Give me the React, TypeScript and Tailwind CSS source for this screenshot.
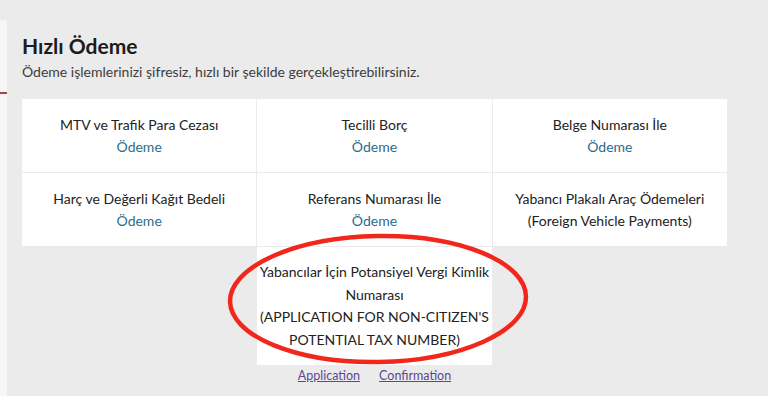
import React from "react";

const cells = [
  { lines: ["MTV ve Trafik Para Cezası"], link: "Ödeme" },
  { lines: ["Tecilli Borç"], link: "Ödeme" },
  { lines: ["Belge Numarası İle"], link: "Ödeme" },
  { lines: ["Harç ve Değerli Kağıt Bedeli"], link: "Ödeme" },
  { lines: ["Referans Numarası İle"], link: "Ödeme" },
  { lines: ["Yabancı Plakalı Araç Ödemeleri", "(Foreign Vehicle Payments)"], link: null },
];

export default function App() {
  return (
    <div
      className="w-[768px] h-[396px] overflow-hidden bg-[#ebebeb] flex text-[#222]"
      style={{ fontFamily: "Lato, 'Noto Sans', sans-serif" }}
    >
      <div className="w-[7px] mt-[20px] bg-[#f6f6f6] flex flex-col">
        <div className="mt-[72px] h-[2px] bg-[#a8434b]" />
      </div>
      <div className="flex-1 pl-[15px] pr-[41px] pt-[33px] relative">
        <h1 className="text-[21px] leading-[26px] font-bold text-[#1c1c1c]">Hızlı Ödeme</h1>
        <p className="text-[14px] leading-[20px] mt-[3px] text-[#3d3d3d]">
          Ödeme işlemlerinizi şifresiz, hızlı bir şekilde gerçekleştirebilirsiniz.
        </p>
        <div className="mt-[17px] grid grid-cols-3 gap-[1px]">
          {cells.map((c, i) => (
            <div key={i} className="bg-white h-[73px] flex flex-col items-center justify-center text-[14px] leading-[21.5px] text-center">
              {c.lines.map((l) => (
                <div key={l}>{l}</div>
              ))}
              {c.link && <div className="text-[#2b6d8e]">{c.link}</div>}
            </div>
          ))}
          <div />
          <div className="bg-white h-[118px] flex flex-col items-center justify-center text-[14px] leading-[22.5px] text-center">
            <div>Yabancılar İçin Potansiyel Vergi Kimlik</div>
            <div>Numarası</div>
            <div>(APPLICATION FOR NON-CITIZEN'S</div>
            <div>POTENTIAL TAX NUMBER)</div>
          </div>
        </div>
        <div className="flex justify-center gap-[19px] mt-[2px] text-[12.5px] leading-[18px] text-[#5d4793] underline">
          <span>Application</span>
          <span>Confirmation</span>
        </div>
        <svg className="absolute left-[217px] top-[232px] pointer-events-none" width="310" height="136" viewBox="0 0 310 136">
          <ellipse cx="154" cy="67" rx="148" ry="63" fill="none" stroke="#f2271c" strokeWidth="4.5" transform="rotate(-1 154 67)" />
        </svg>
      </div>
    </div>
  );
}
